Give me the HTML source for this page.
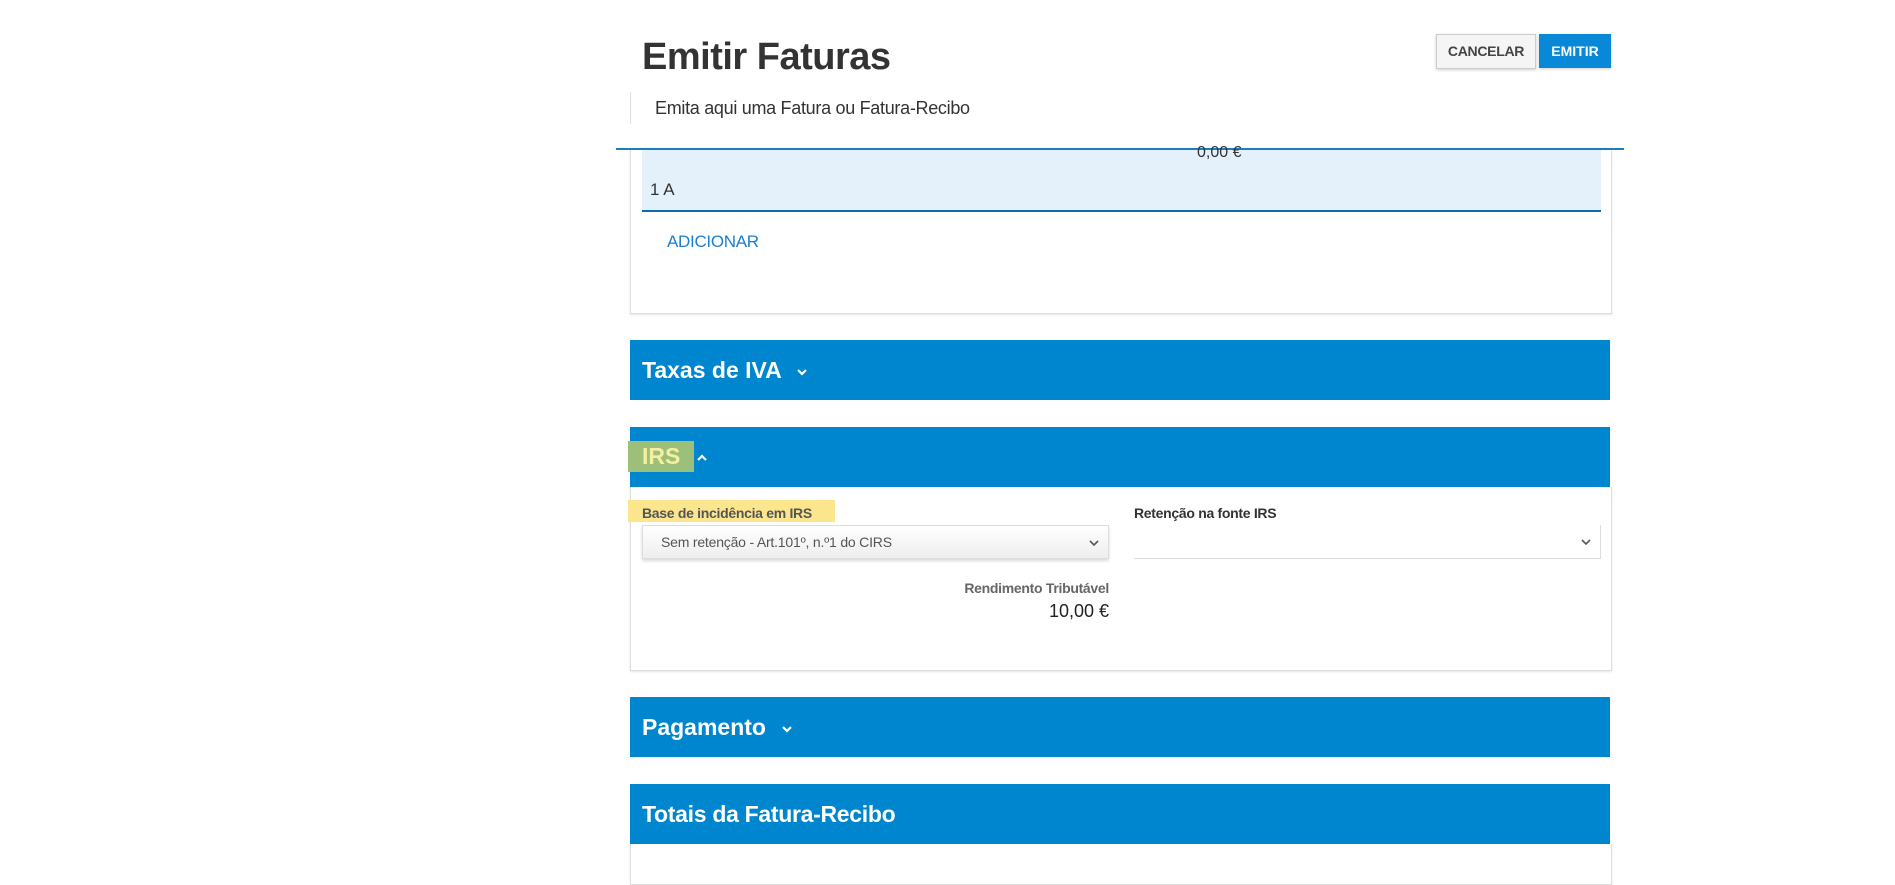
<!DOCTYPE html>
<html><head><meta charset="utf-8"><style>
body{margin:0;width:1895px;height:876px;background:#fff;font-family:"Liberation Sans",sans-serif;position:relative;overflow:hidden;color:#333}
.a{position:absolute}
.hdr{position:absolute;left:630px;width:980px;background:#0085cf;color:#fff;font-weight:bold;font-size:23px}
.hdr span{position:absolute;left:12px}
.card{position:absolute;left:630px;width:980px;border:1px solid #ddd;border-top:none;box-shadow:0 1px 2px rgba(0,0,0,.1)}
.sel{position:absolute;height:34px;border:1px solid #ddd;box-sizing:border-box;font-size:14px;color:#555}
svg.c{position:absolute}
</style></head><body>
<div class="a" style="left:642px;top:36px;font-size:38px;font-weight:bold;color:#333;letter-spacing:-0.5px">Emitir Faturas</div>
<div class="a" style="left:1436px;top:34px;width:98px;height:33px;border:1px solid #ccc;background:#f5f5f5;box-shadow:0 1px 3px rgba(0,0,0,.2);font-size:14px;font-weight:bold;color:#444;text-align:center;line-height:33px;letter-spacing:-0.3px">CANCELAR</div>
<div class="a" style="left:1539px;top:34px;width:72px;height:34px;background:#0a88d8;box-shadow:0 1px 3px rgba(0,0,0,.2);font-size:14px;font-weight:bold;color:#fff;text-align:center;line-height:34px">EMITIR</div>
<div class="a" style="left:630px;top:92px;width:1px;height:32px;background:#ddd"></div>
<div class="a" style="left:655px;top:98px;font-size:18px;color:#333;letter-spacing:-0.3px">Emita aqui uma Fatura ou Fatura-Recibo</div>
<div class="card" style="top:150px;height:163px"></div>
<div class="a" style="left:616px;top:148px;width:1008px;height:2px;background:#1a7ebf"></div>
<div class="a" style="left:642px;top:150px;width:959px;height:61px;background:#e5f1fa"></div>
<div class="a" style="left:1197px;top:144px;font-size:16px;color:#333">0,00 €</div>
<div class="a" style="left:650px;top:180px;font-size:17px;color:#333">1 A</div>
<div class="a" style="left:642px;top:210px;width:959px;height:2px;background:#0a6cb0"></div>
<div class="a" style="left:667px;top:232px;font-size:17px;color:#1a7fd0;letter-spacing:-0.3px">ADICIONAR</div>
<div class="hdr" style="top:340px;height:60px"><span style="top:17px">Taxas de IVA</span><svg class="c" style="left:166px;top:28px" width="12" height="8"><path d="M2 2l4 4 4-4" stroke="#fff" stroke-width="2.2" fill="none"/></svg></div>
<div class="hdr" style="top:427px;height:60px"><span style="top:14px;left:-2px;padding:2px 14px 2px 14px;background:#9cbf7a;color:#f4f0a0">IRS</span><svg class="c" style="left:66px;top:27px" width="12" height="8"><path d="M2 6l4-4 4 4" stroke="#fff" stroke-width="2.2" fill="none"/></svg></div>
<div class="card" style="top:487px;height:183px"></div>
<div class="a" style="left:628px;top:500px;width:207px;height:22px;background:#fbe68e"></div>
<div class="a" style="left:642px;top:505px;font-size:14px;font-weight:bold;color:#555;letter-spacing:-0.3px">Base de incidência em IRS</div>
<div class="a" style="left:1134px;top:505px;font-size:14px;font-weight:bold;color:#333;letter-spacing:-0.3px">Retenção na fonte IRS</div>
<div class="sel" style="left:642px;top:525px;width:467px;background:linear-gradient(#fff,#eee);box-shadow:0 2px 3px rgba(0,0,0,.15)"><span style="position:absolute;left:18px;top:8px;letter-spacing:-0.2px">Sem retenção - Art.101º, n.º1 do CIRS</span><svg class="c" style="right:8px;top:13px" width="12" height="8"><path d="M2 2l4 4 4-4" stroke="#555" stroke-width="1.6" fill="none"/></svg></div>
<div class="sel" style="left:1134px;top:525px;width:467px;border-top:none;border-left:none"><svg class="c" style="right:8px;top:13px" width="12" height="8"><path d="M2 2l4 4 4-4" stroke="#555" stroke-width="1.6" fill="none"/></svg></div>
<div class="a" style="left:900px;top:580px;width:209px;text-align:right;font-size:14px;font-weight:bold;color:#666;letter-spacing:-0.3px">Rendimento Tributável</div>
<div class="a" style="left:900px;top:601px;width:209px;text-align:right;font-size:18px;color:#222">10,00 €</div>
<div class="hdr" style="top:697px;height:60px"><span style="top:17px">Pagamento</span><svg class="c" style="left:151px;top:28px" width="12" height="8"><path d="M2 2l4 4 4-4" stroke="#fff" stroke-width="2.2" fill="none"/></svg></div>
<div class="hdr" style="top:784px;height:60px"><span style="top:17px;letter-spacing:-0.3px">Totais da Fatura-Recibo</span></div>
<div class="card" style="top:844px;height:40px"></div>
</body></html>
